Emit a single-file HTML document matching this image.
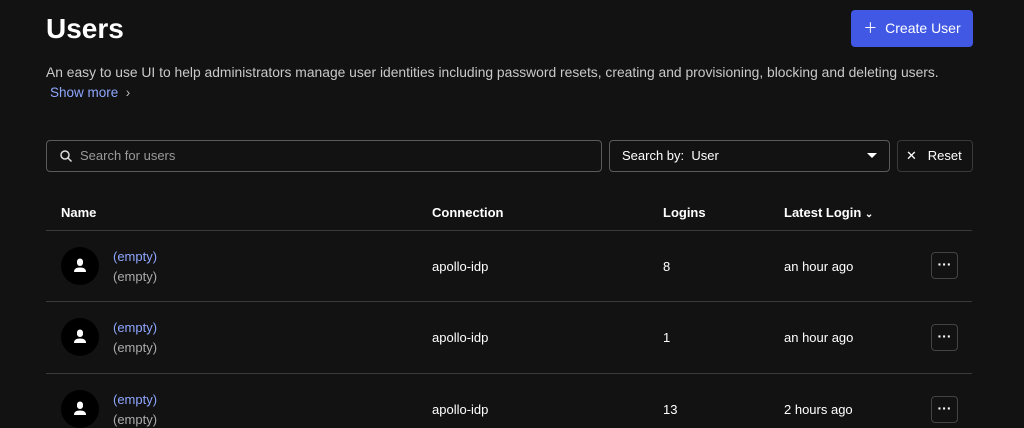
<!DOCTYPE html>
<html><head><style>
*{margin:0;padding:0;box-sizing:border-box}
body{width:1024px;height:423px;background:#121212;font-family:"Liberation Sans",sans-serif;color:#fff;position:relative;overflow:hidden}
.a{position:absolute;white-space:nowrap}
.box{position:absolute;border:1px solid #5a5a5a;border-radius:4px}
.line{position:absolute;left:46px;width:926px;height:1px;background:#3a3a3a}
.av{position:absolute;left:61px;width:38px;height:38px;border-radius:50%;background:#000}
.dots{position:absolute;left:931px;width:27px;height:27px;border:1px solid #444;border-radius:4px;color:#fff;font-size:14px;font-weight:bold;text-align:center;line-height:22px;letter-spacing:0px}
.t{font-size:13px}
</style></head><body>
<div class="a" style="left:46px;top:13px;font-size:28px;font-weight:bold">Users</div>
<div class="a" style="left:851px;top:10px;width:122px;height:37px;background:#4058e4;border-radius:4px;font-size:14px;line-height:37px;text-align:center">＋&nbsp; Create User</div>
<div class="a" style="left:46px;top:64px;font-size:13.85px;color:#c9c9c9">An easy to use UI to help administrators manage user identities including password resets, creating and provisioning, blocking and deleting users.</div>
<div class="a" style="left:50px;top:85px;font-size:13.5px;color:#8fa6ff">Show more <span style="color:#bbb">&nbsp;›</span></div>
<div class="box" style="left:46px;top:140px;width:556px;height:32px"></div>
<svg class="a" style="left:59px;top:149px" width="14" height="14" viewBox="0 0 14 14"><circle cx="6" cy="6" r="4" fill="none" stroke="#ddd" stroke-width="1.5"/><path d="M9 9l3.5 3.5" stroke="#ddd" stroke-width="1.5"/></svg>
<div class="a t" style="left:80px;top:148px;color:#9a9a9a">Search for users</div>
<div class="box" style="left:609px;top:140px;width:281px;height:32px"></div>
<div class="a t" style="left:622px;top:148px">Search by:&nbsp; User</div>
<div class="a" style="left:867px;top:153px;width:0;height:0;border-left:5px solid transparent;border-right:5px solid transparent;border-top:5px solid #fff"></div>
<div class="box" style="left:897px;top:140px;width:76px;height:32px;border-color:#3a3a3a"></div>
<div class="a t" style="left:906px;top:148px">✕&nbsp;&nbsp; Reset</div>
<div class="a t" style="left:61px;top:205px;font-weight:bold">Name</div>
<div class="a t" style="left:432px;top:205px;font-weight:bold">Connection</div>
<div class="a t" style="left:663px;top:205px;font-weight:bold">Logins</div>
<div class="a t" style="left:784px;top:205px;font-weight:bold">Latest Login <span style="font-size:10px">⌄</span></div>
<div class="line" style="top:230px"></div>
<div class="line" style="top:301px"></div>
<div class="line" style="top:373px"></div>

<div class="av" style="top:247px"></div>
<div class="av" style="top:318px"></div>
<div class="av" style="top:390px"></div>
<svg class="a" style="left:72px;top:258px" width="16" height="16" viewBox="0 0 16 16"><path d="M5 3.5a3 3 0 0 1 6 0v1.5a3 3 0 0 1-6 0z" fill="#fff"/><path d="M2 14c0-3 2-4.5 6-4.5s6 1.5 6 4.5z" fill="#fff"/></svg>
<svg class="a" style="left:72px;top:329px" width="16" height="16" viewBox="0 0 16 16"><path d="M5 3.5a3 3 0 0 1 6 0v1.5a3 3 0 0 1-6 0z" fill="#fff"/><path d="M2 14c0-3 2-4.5 6-4.5s6 1.5 6 4.5z" fill="#fff"/></svg>
<svg class="a" style="left:72px;top:401px" width="16" height="16" viewBox="0 0 16 16"><path d="M5 3.5a3 3 0 0 1 6 0v1.5a3 3 0 0 1-6 0z" fill="#fff"/><path d="M2 14c0-3 2-4.5 6-4.5s6 1.5 6 4.5z" fill="#fff"/></svg>

<div class="a t" style="left:113px;top:249px;color:#8fa6ff">(empty)</div>
<div class="a t" style="left:113px;top:269px;color:#aaa">(empty)</div>
<div class="a t" style="left:113px;top:320px;color:#8fa6ff">(empty)</div>
<div class="a t" style="left:113px;top:340px;color:#aaa">(empty)</div>
<div class="a t" style="left:113px;top:392px;color:#8fa6ff">(empty)</div>
<div class="a t" style="left:113px;top:412px;color:#aaa">(empty)</div>

<div class="a t" style="left:432px;top:259px">apollo-idp</div>
<div class="a t" style="left:663px;top:259px">8</div>
<div class="a t" style="left:784px;top:259px">an hour ago</div>
<div class="dots" style="top:252px">···</div>
<div class="a t" style="left:432px;top:330px">apollo-idp</div>
<div class="a t" style="left:663px;top:330px">1</div>
<div class="a t" style="left:784px;top:330px">an hour ago</div>
<div class="dots" style="top:324px">···</div>
<div class="a t" style="left:432px;top:402px">apollo-idp</div>
<div class="a t" style="left:663px;top:402px">13</div>
<div class="a t" style="left:784px;top:402px">2 hours ago</div>
<div class="dots" style="top:396px">···</div>
</body></html>
